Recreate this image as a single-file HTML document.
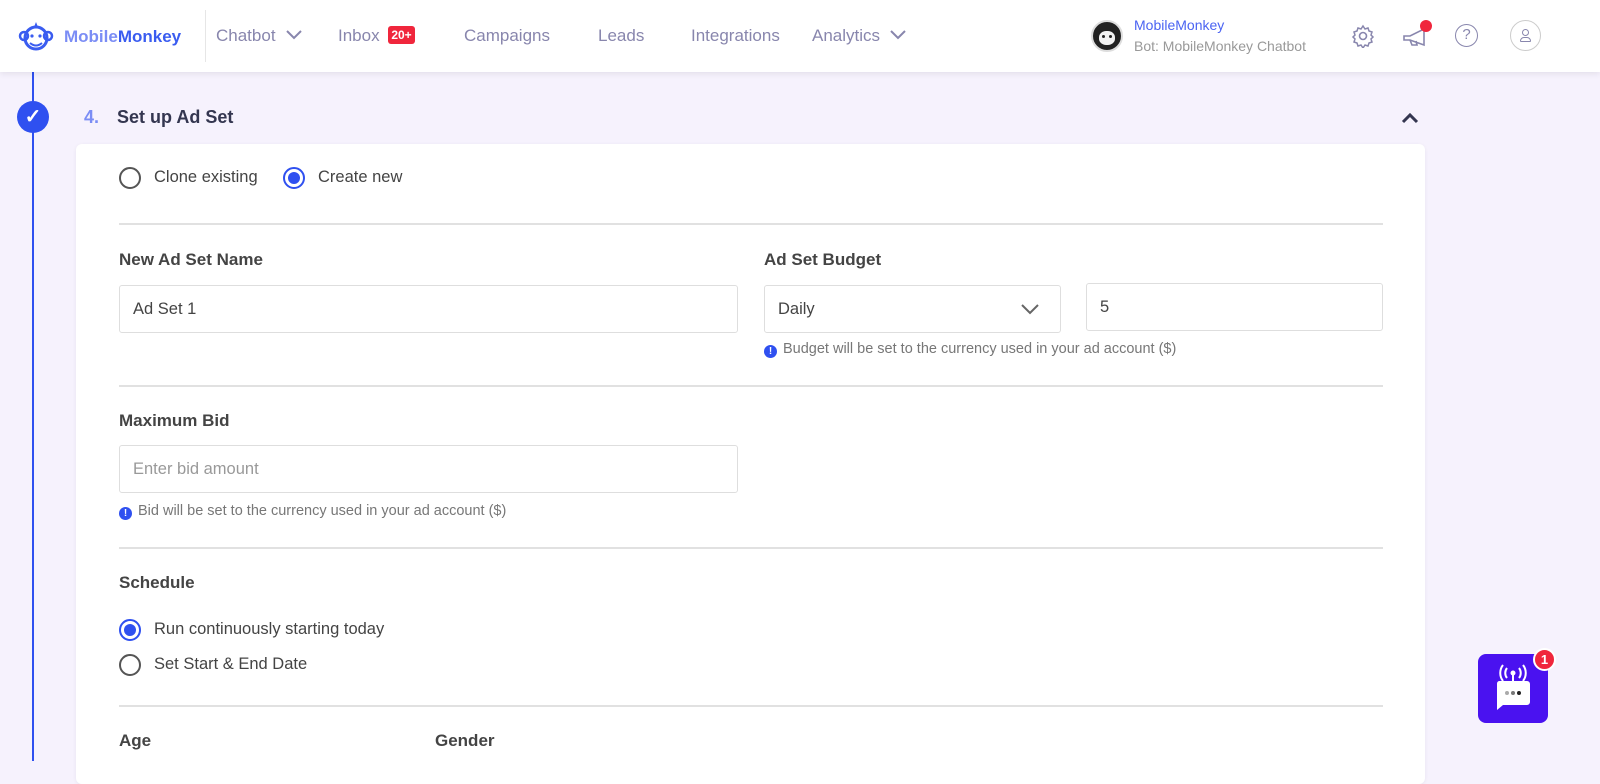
<!DOCTYPE html>
<html><head><meta charset="utf-8"><style>
*{box-sizing:border-box;margin:0;padding:0}
body{width:1600px;height:761px;overflow:hidden;background:#f6f2fd;font-family:"Liberation Sans",sans-serif;position:relative;color:#333}
.hdr{position:absolute;left:0;top:0;width:1600px;height:72px;background:#fff;box-shadow:0 2px 6px rgba(0,0,0,.08);z-index:2}
.abs{position:absolute}
.nav{position:absolute;top:26px;font-size:17px;color:#8886ad}
.line{position:absolute;left:32px;top:72px;width:2px;height:689px;background:#2f50f0}
.card{position:absolute;left:76px;top:144px;width:1349px;height:640px;background:#fff;border-radius:6px;box-shadow:0 1px 4px rgba(0,0,0,.06)}
.hr{position:absolute;left:119px;width:1264px;height:2px;background:#e1e1e1}
.lbl{position:absolute;font-size:17px;font-weight:bold;color:#444}
.inp{position:absolute;height:48px;border:1px solid #dedede;border-radius:3px;font-size:16.5px;color:#444;padding:14px 13px}
.radio{position:absolute;width:22px;height:22px;border-radius:50%;border:2px solid #555}
.radio.on{border-color:#2f50f0}
.radio.on:after{content:"";position:absolute;left:3px;top:3px;width:12px;height:12px;border-radius:50%;background:#2f50f0}
.rt{position:absolute;font-size:16.5px;color:#444}
.note{position:absolute;font-size:14.5px;color:#777}
.note i{display:inline-block;width:13px;height:13px;border-radius:50%;background:#2f50f0;color:#fff;font-style:normal;font-size:10px;text-align:center;line-height:13px;font-weight:bold;margin-right:6px;vertical-align:-1px}
.chev{display:inline-block;margin-left:10px;vertical-align:1px}
</style></head><body>
<div class="hdr">
 <svg class="abs" style="left:18px;top:19px" width="36" height="36" viewBox="0 0 36 36"><circle cx="18" cy="19" r="11" fill="none" stroke="#3a5cf0" stroke-width="3"/><circle cx="6" cy="17" r="4" fill="none" stroke="#3a5cf0" stroke-width="2.5"/><circle cx="30" cy="17" r="4" fill="none" stroke="#3a5cf0" stroke-width="2.5"/><circle cx="14" cy="17" r="1.6" fill="#3a5cf0"/><circle cx="22" cy="17" r="1.6" fill="#3a5cf0"/><path d="M12 24 q6 5 12 0" stroke="#3a5cf0" stroke-width="2" fill="none"/><path d="M16 8 l2-5 2 5" fill="#3a5cf0"/></svg>
 <div class="abs" style="left:64px;top:27px;font-size:17px;font-weight:bold;color:#7b8df5">Mobile<span style="color:#3a5cf0">Monkey</span></div>
 <div class="abs" style="left:205px;top:10px;width:1px;height:52px;background:#e6e6e6"></div>
 <div class="nav" style="left:216px">Chatbot<svg class="chev" width="16" height="10"><path d="M1 1l7 7 7-7" stroke="#8886ad" stroke-width="2" fill="none"/></svg></div>
 <div class="nav" style="left:338px">Inbox <span style="background:#f0263c;color:#fff;font-size:12px;font-weight:bold;padding:2px 3px;border-radius:3px;margin-left:4px;vertical-align:2px">20+</span></div>
 <div class="nav" style="left:464px">Campaigns</div>
 <div class="nav" style="left:598px">Leads</div>
 <div class="nav" style="left:691px">Integrations</div>
 <div class="nav" style="left:812px">Analytics<svg class="chev" width="16" height="10"><path d="M1 1l7 7 7-7" stroke="#8886ad" stroke-width="2" fill="none"/></svg></div>
 <div class="abs" style="left:1091px;top:20px;width:32px;height:32px;border-radius:50%;background:#222;border:2px solid #ddd"><div style="position:absolute;left:6px;top:9px;width:16px;height:14px;border-radius:45%;background:#f2f2f2"></div><div style="position:absolute;left:9px;top:13px;width:3px;height:3px;border-radius:50%;background:#222"></div><div style="position:absolute;left:16px;top:13px;width:3px;height:3px;border-radius:50%;background:#222"></div></div>
 <div class="abs" style="left:1134px;top:17px;font-size:14px;color:#4a63f2">MobileMonkey</div>
 <div class="abs" style="left:1134px;top:38px;font-size:14px;color:#999">Bot: MobileMonkey Chatbot</div>
 <svg class="abs" style="left:1351px;top:24px" width="24" height="24" viewBox="0 0 24 24"><circle cx="12" cy="12" r="3.5" fill="none" stroke="#8886ad" stroke-width="1.6"/><path d="M12 2l2 3 3-1 1 3 3 1-1 3 2 2-2 2 1 3-3 1-1 3-3-1-2 3-2-3-3 1-1-3-3-1 1-3-2-2 2-2-1-3 3-1 1-3 3 1z" fill="none" stroke="#8886ad" stroke-width="1.5"/></svg>
 <svg class="abs" style="left:1402px;top:26px" width="28" height="22" viewBox="0 0 28 22"><path d="M2 10h6l14-7v16L8 14H2z M8 14l2 5h5l-1-4" fill="none" stroke="#8886ad" stroke-width="1.6"/></svg>
 <div class="abs" style="left:1420px;top:20px;width:12px;height:12px;border-radius:50%;background:#f0263c"></div>
 <div class="abs" style="left:1455px;top:24px;width:23px;height:23px;border-radius:50%;border:1.6px solid #8886ad;font-size:15px;color:#8886ad;text-align:center;line-height:20px">?</div>
 <div class="abs" style="left:1510px;top:20px;width:31px;height:31px;border-radius:50%;border:1px solid #ccc;"><div style="position:absolute;left:11px;top:8px;width:7px;height:7px;border-radius:50%;border:1.5px solid #8886ad"></div><div style="position:absolute;left:9px;top:16px;width:11px;height:5px;border:1.5px solid #8886ad;border-radius:4px 4px 1px 1px"></div></div>
</div>
<div class="line"></div>
<div class="abs" style="left:17px;top:101px;width:32px;height:32px;border-radius:50%;background:#2f50f0;color:#fff;text-align:center;font-size:20px;line-height:32px;font-weight:bold">&#10003;</div>
<div class="abs" style="left:84px;top:107px;font-size:18px;font-weight:bold;color:#7b8df5">4.</div>
<div class="abs" style="left:117px;top:107px;font-size:18px;font-weight:bold;color:#343650">Set up Ad Set</div>
<svg class="abs" style="left:1401px;top:112px" width="18" height="12"><path d="M2 10l7-7 7 7" stroke="#343650" stroke-width="3" fill="none"/></svg>
<div class="card"></div>
<div class="radio" style="left:119px;top:167px"></div><div class="rt" style="left:154px;top:168px">Clone existing</div>
<div class="radio on" style="left:283px;top:167px"></div><div class="rt" style="left:318px;top:168px">Create new</div>
<div class="hr" style="top:223px"></div>
<div class="lbl" style="left:119px;top:250px">New Ad Set Name</div>
<div class="inp" style="left:119px;top:285px;width:619px">Ad Set 1</div>
<div class="lbl" style="left:764px;top:250px">Ad Set Budget</div>
<div class="inp" style="left:764px;top:285px;width:297px">Daily<svg style="position:absolute;right:20px;top:17px" width="20" height="12"><path d="M2 2l8 8 8-8" stroke="#666" stroke-width="2" fill="none"/></svg></div>
<div class="inp" style="left:1086px;top:283px;width:297px">5</div>
<div class="note" style="left:764px;top:341px"><i>!</i>Budget will be set to the currency used in your ad account ($)</div>
<div class="hr" style="top:385px"></div>
<div class="lbl" style="left:119px;top:411px">Maximum Bid</div>
<div class="inp" style="left:119px;top:445px;width:619px;color:#999">Enter bid amount</div>
<div class="note" style="left:119px;top:503px"><i>!</i>Bid will be set to the currency used in your ad account ($)</div>
<div class="hr" style="top:547px"></div>
<div class="lbl" style="left:119px;top:573px">Schedule</div>
<div class="radio on" style="left:119px;top:619px"></div><div class="rt" style="left:154px;top:620px">Run continuously starting today</div>
<div class="radio" style="left:119px;top:654px"></div><div class="rt" style="left:154px;top:655px">Set Start &amp; End Date</div>
<div class="hr" style="top:705px"></div>
<div class="lbl" style="left:119px;top:731px">Age</div>
<div class="lbl" style="left:435px;top:731px">Gender</div>
<div class="abs" style="left:1478px;top:654px;width:70px;height:69px;border-radius:8px;background:#4a12f0">
 <svg style="position:absolute;left:15px;top:6px" width="40" height="54" viewBox="0 0 40 54"><path d="M14 8a8 8 0 0 0 0 10M26 8a8 8 0 0 1 0 10M10 5a13 13 0 0 0 0 16M30 5a13 13 0 0 1 0 16" stroke="#fff" stroke-width="2" fill="none"/><circle cx="20" cy="13" r="2.5" fill="#fff"/><path d="M20 13v8" stroke="#fff" stroke-width="2"/><path d="M6 21h28a3 3 0 0 1 3 3v18a3 3 0 0 1-3 3H10l-6 5V24a3 3 0 0 1 2-3z" fill="#fff"/><circle cx="14" cy="33" r="2" fill="#aaa"/><circle cx="20" cy="33" r="2" fill="#777"/><circle cx="26" cy="33" r="2" fill="#222"/></svg>
</div>
<div class="abs" style="left:1533px;top:648px;width:23px;height:23px;border-radius:50%;background:#f0263c;border:2px solid #fff;color:#fff;font-size:13px;font-weight:bold;text-align:center;line-height:19px">1</div>
</body></html>
